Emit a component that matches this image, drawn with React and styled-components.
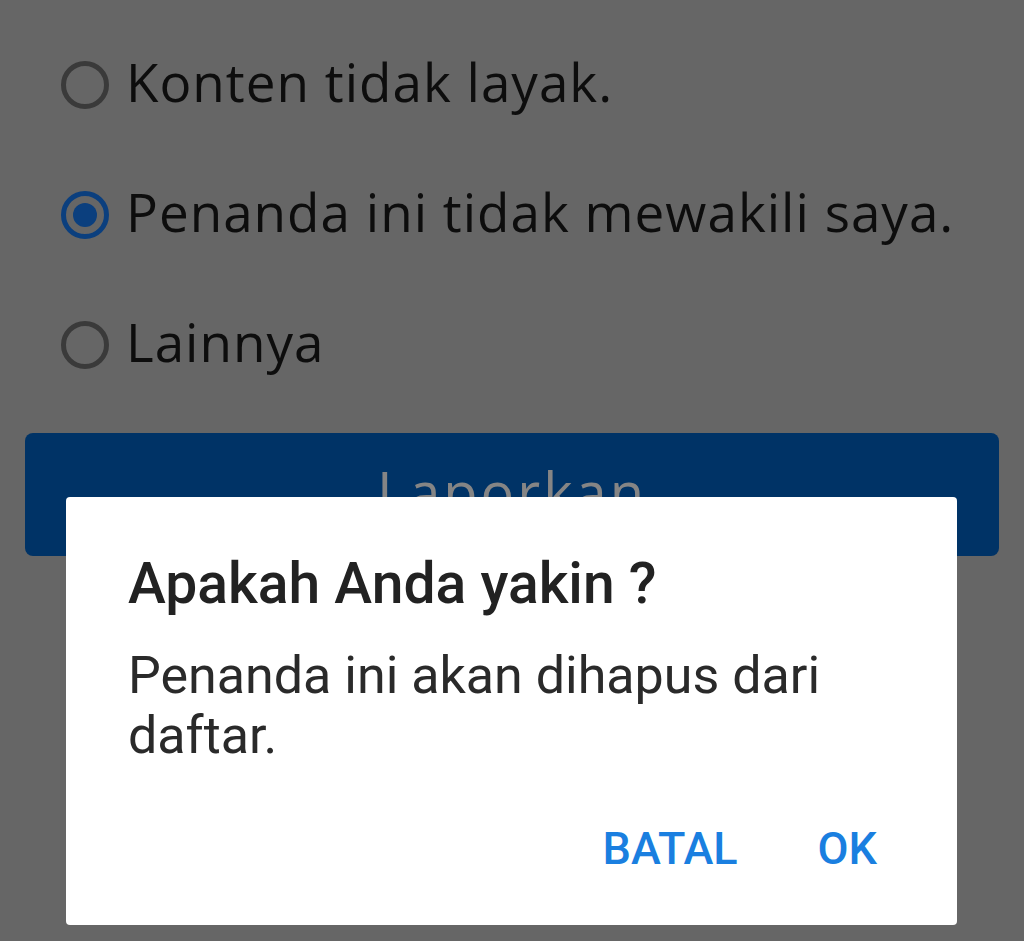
import React from 'react'
import styled, { createGlobalStyle } from 'styled-components';

const Global = createGlobalStyle`
  html, body { margin: 0; padding: 0; }
  body { background: #666666; overflow: hidden; }
`;

const options = [
  { label: 'Konten tidak layak.', checked: false },
  { label: 'Penanda ini tidak mewakili saya.', checked: true },
  { label: 'Lainnya', checked: false },
];

function App() {
  return <Page>
    <Global />
    <OptionList>
      {options.map((o) => (
        <OptionRow key={o.label}>
          <Radio $checked={o.checked}>{o.checked && <Dot />}</Radio>
          <OptionLabel>{o.label}</OptionLabel>
        </OptionRow>
      ))}
    </OptionList>
    <ReportButton>Laporkan</ReportButton>

    <Dialog>
      <DialogTitle>Apakah Anda yakin ?</DialogTitle>
      <DialogBody>Penanda ini akan dihapus dari daftar.</DialogBody>
      <DialogActions>
        <ActionButton>BATAL</ActionButton>
        <ActionButton>OK</ActionButton>
      </DialogActions>
    </Dialog>
  </Page>
}

const Page = styled.div`
  position: relative;
  width: 1024px;
  height: 941px;
  background: #666666;
  overflow: hidden;
`;

const OptionList = styled.div`
  display: flex;
  flex-direction: column;
  gap: 82px;
  padding: 61px 0 0 61px;
`;

const OptionRow = styled.div`
  display: flex;
  align-items: center;
  gap: 17px;
  height: 48px;
`;

const Radio = styled.div`
  box-sizing: border-box;
  width: 48px;
  height: 48px;
  border-radius: 50%;
  border: 5px solid ${p => p.$checked ? '#0b3f7e' : '#3a3a3a'};
  display: flex;
  align-items: center;
  justify-content: center;
  flex-shrink: 0;
`;

const Dot = styled.div`
  width: 24px;
  height: 24px;
  border-radius: 50%;
  background: #0b3f7e;
`;

const OptionLabel = styled.span`
  font-family: "Open Sans", sans-serif;
  font-size: 53px;
  color: #0d0d0d;
  letter-spacing: 1px;
  line-height: 1;
  white-space: nowrap;
  margin-bottom: 8px;
`;

const ReportButton = styled.div`
  margin: 64px 25px 0;
  height: 123px;
  border-radius: 8px;
  background: #003366;
  color: #858585;
  font-family: "Open Sans", sans-serif;
  font-size: 56px;
  line-height: 1;
  letter-spacing: 3px;
  display: flex;
  justify-content: center;
  padding-top: 30px;
  box-sizing: border-box;
`;

const Dialog = styled.div`
  position: absolute;
  left: 66px;
  top: 497px;
  width: 891px;
  height: 428px;
  box-sizing: border-box;
  background: #ffffff;
  border-radius: 4px;
  padding: 57px 62px 0;
  font-family: Roboto, sans-serif;
`;

const DialogTitle = styled.div`
  font-size: 57px;
  font-weight: 500;
  color: #222222;
  line-height: 60px;
`;

const DialogBody = styled.div`
  margin-top: 32px;
  font-size: 52px;
  color: #2a2a2a;
  line-height: 60px;
`;

const DialogActions = styled.div`
  display: flex;
  justify-content: flex-end;
  gap: 80px;
  margin-top: 60px;
  padding-right: 18px;
`;

const ActionButton = styled.div`
  font-size: 45px;
  font-weight: 500;
  color: #1a7fe0;
  line-height: 1;
`;

export default App;
